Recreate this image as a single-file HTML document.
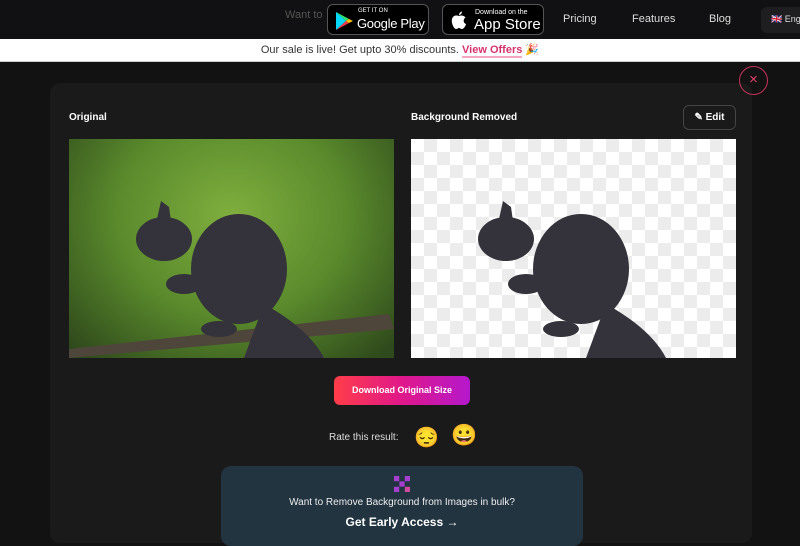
<!DOCTYPE html>
<html><head><style>
*{margin:0;padding:0;box-sizing:border-box}
body{width:800px;height:533px;overflow:hidden;background:#121213;font-family:"Liberation Sans",sans-serif;position:relative;color:#eee}
.top{position:absolute;left:0;top:0;width:800px;height:39px;background:#111113}
.badge{position:absolute;top:4px;height:31px;background:#000;border:1px solid #555;border-radius:6px;color:#fff;white-space:nowrap}
.nav{position:absolute;top:13px;font-size:11px;color:#ddd}
.sale{position:absolute;top:39px;left:0;width:800px;height:23px;background:#fff;border-bottom:1px solid #ccc;color:#333;font-size:11px;text-align:center;line-height:23px}
.sale b{color:#d6336c;border-bottom:2px solid #f3a6c0}
.modal{position:absolute;left:50px;top:83px;width:702px;height:460px;background:#1a1a1b;border-radius:10px}
.lbl{position:absolute;top:112px;font-size:10px;font-weight:bold;color:#fff}
.img{position:absolute;top:139px;width:325px;height:219px;overflow:hidden}
.checker{background-color:#fff;background-image:linear-gradient(45deg,#ececec 25%,transparent 25%,transparent 75%,#ececec 75%),linear-gradient(45deg,#ececec 25%,transparent 25%,transparent 75%,#ececec 75%);background-size:26px 26px;background-position:0 0,13px 13px}
</style></head><body>
<div class="top"></div>
<div style="position:absolute;left:285px;top:9px;font-size:11px;color:#555">Want to</div>
<div class="badge" style="left:327px;width:102px"><svg style="position:absolute;left:6px;top:6px" width="20" height="20" viewBox="0 0 20 20"><path d="M2 1 L12 10 L2 19Z" fill="#00d7fe"/><path d="M2 1 L15 8 L12 10Z" fill="#32e26f"/><path d="M2 19 L15 12 L12 10Z" fill="#f23b4a"/><path d="M15 8 L19 10 L15 12 L12 10Z" fill="#ffc000"/></svg><div style="position:absolute;left:30px;top:3px;font-size:6px">GET IT ON</div><div style="position:absolute;left:29px;top:11px;font-size:13px;letter-spacing:-0.3px">Google Play</div></div>
<div class="badge" style="left:442px;width:102px"><svg style="position:absolute;left:8px;top:6px" width="16" height="19" viewBox="0 0 16 19"><path d="M8 5C6 4 2 4 1 8C0 12 3 18 5 18C6.5 18 7 17 8 17C9 17 9.5 18 11 18C13 18 15 14 15 13C12 12 12 8 14.5 6.5C13 4.5 10 4 8 5Z M8 4C8 2 10 0.5 11 0.5C11 2.5 9.5 4 8 4Z" fill="#fff"/></svg><div style="position:absolute;left:32px;top:4px;font-size:7px">Download on the</div><div style="position:absolute;left:31px;top:11px;font-size:15px">App Store</div></div>
<div class="nav" style="left:563px">Pricing</div>
<div class="nav" style="left:632px">Features</div>
<div class="nav" style="left:709px">Blog</div>
<div style="position:absolute;left:761px;top:7px;width:50px;height:26px;background:#1e1e21;border-radius:6px;font-size:9px;color:#ddd;padding:7px 0 0 10px;white-space:nowrap">🇬🇧 Eng</div>
<div class="sale">Our sale is live! Get upto 30% discounts. <b>View Offers</b> 🎉</div>
<div class="modal"></div>
<div style="position:absolute;left:739px;top:66px;width:29px;height:29px;border:1.5px solid #c2335a;border-radius:50%;color:#e0406a;font-size:15px;text-align:center;line-height:26px">×</div>
<div class="lbl" style="left:69px">Original</div>
<div class="lbl" style="left:411px">Background Removed</div>
<div style="position:absolute;left:683px;top:105px;width:53px;height:25px;border:1px solid #444;border-radius:6px;font-size:10px;font-weight:bold;color:#fff;text-align:center;line-height:23px">✎ Edit</div>
<div class="img" style="left:69px;background:radial-gradient(ellipse at 50% 35%,#7fae3e,#5a8a2c 50%,#2f4a1c 95%)">
<svg width="325" height="219" viewBox="0 0 325 219"><path d="M0 210 L320 175 L325 190 L0 219Z" fill="#4e463a"/><g fill="#34323a"><ellipse cx="95" cy="100" rx="28" ry="22"/><path d="M88 80 L92 62 L100 68 L102 82Z"/><ellipse cx="170" cy="130" rx="48" ry="55"/><path d="M195 165 Q240 190 255 219 L175 219Z"/><ellipse cx="115" cy="145" rx="18" ry="10"/><ellipse cx="150" cy="190" rx="18" ry="8"/></g></svg></div>
<div class="img checker" style="left:411px">
<svg width="325" height="219" viewBox="0 0 325 219"><g fill="#34323a"><ellipse cx="95" cy="100" rx="28" ry="22"/><path d="M88 80 L92 62 L100 68 L102 82Z"/><ellipse cx="170" cy="130" rx="48" ry="55"/><path d="M195 165 Q240 190 255 219 L175 219Z"/><ellipse cx="115" cy="145" rx="18" ry="10"/><ellipse cx="150" cy="190" rx="18" ry="8"/></g></svg></div>
<div style="position:absolute;left:334px;top:376px;width:136px;height:29px;border-radius:6px;background:linear-gradient(90deg,#ff3d48,#e0188a,#b418cc);color:#fff;font-size:9px;font-weight:bold;text-align:center;line-height:29px">Download Original Size</div>
<div style="position:absolute;left:329px;top:432px;font-size:10px;color:#ddd">Rate this result:</div>
<div style="position:absolute;left:414px;top:425px;font-size:20px">😔</div>
<div style="position:absolute;left:451px;top:424px;font-size:21px">😀</div>
<div style="position:absolute;left:221px;top:466px;width:362px;height:80px;background:#233441;border-radius:10px"></div>
<svg style="position:absolute;left:394px;top:476px" width="16" height="16" viewBox="0 0 4 4"><g fill="#a63fd0"><rect x="0" y="0" width="1.3" height="1.3"/><rect x="2.7" y="0" width="1.3" height="1.3"/><rect x="1.35" y="1.35" width="1.3" height="1.3"/><rect x="0" y="2.7" width="1.3" height="1.3"/><rect x="2.7" y="2.7" width="1.3" height="1.3" fill="#d04aa0"/></g></svg>
<div style="position:absolute;left:221px;top:497px;width:362px;text-align:center;font-size:10px;color:#eee">Want to Remove Background from Images in bulk?</div>
<div style="position:absolute;left:221px;top:515px;width:362px;text-align:center;font-size:12px;font-weight:bold;color:#fff">Get Early Access →</div>
</body></html>
